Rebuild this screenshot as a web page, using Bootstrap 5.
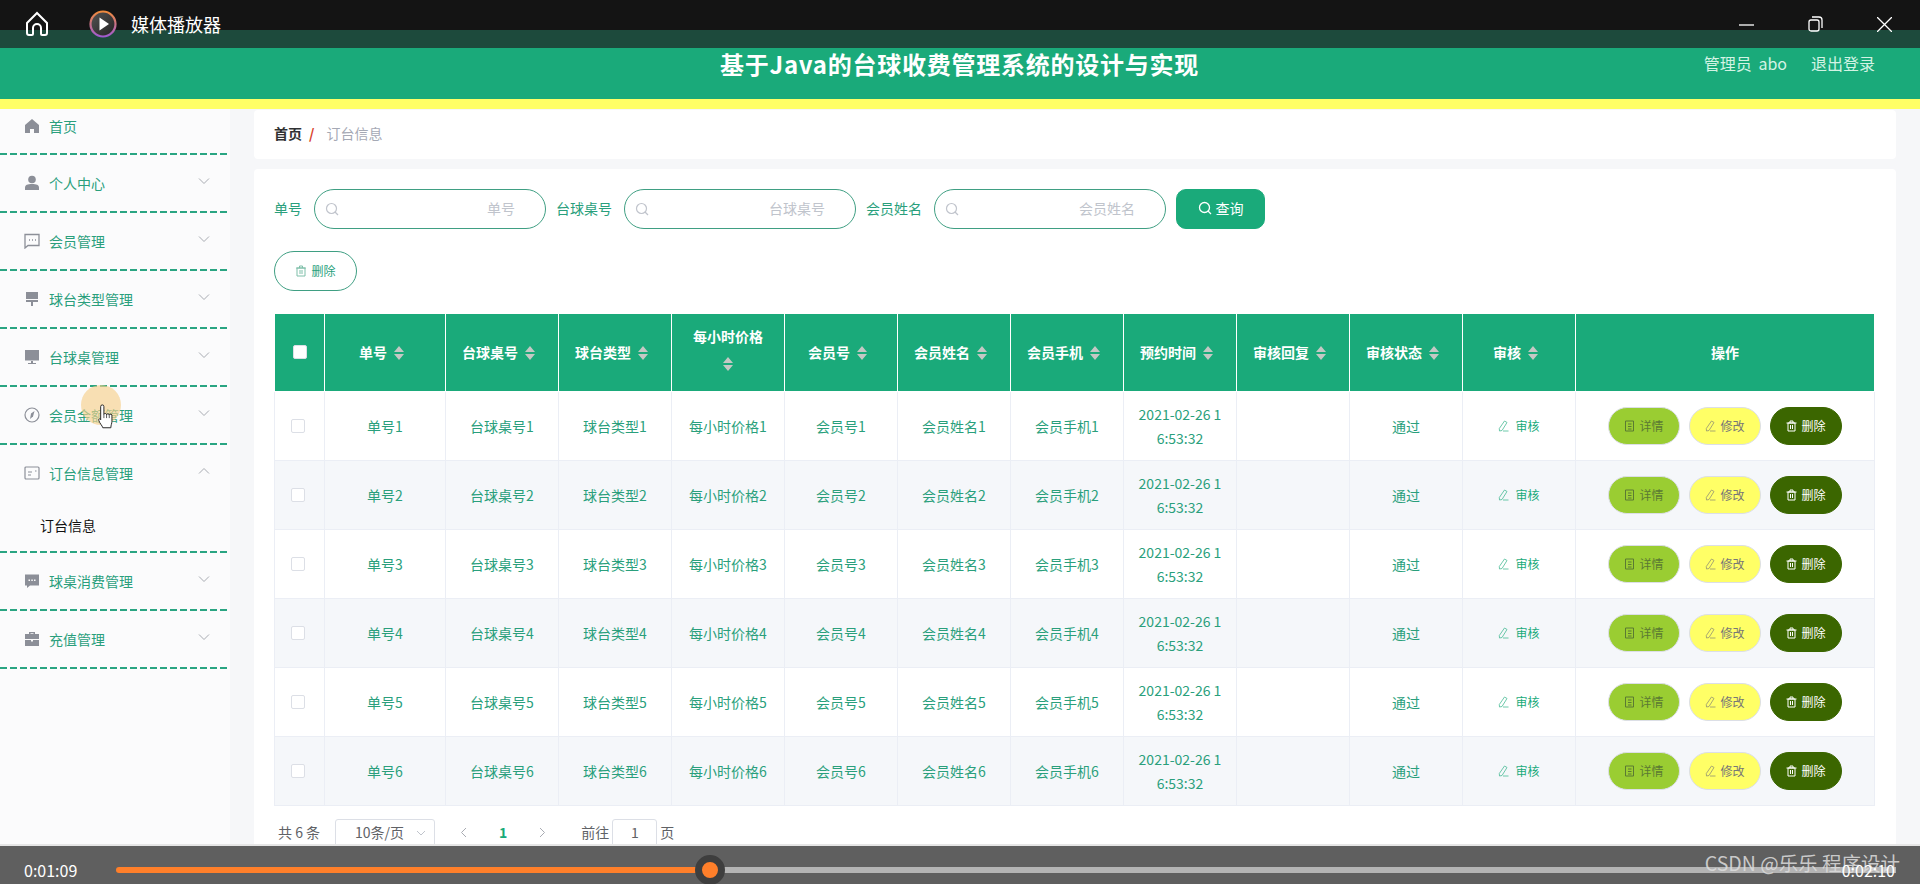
<!DOCTYPE html>
<html lang="en">
<head>
<meta charset="UTF-8">
<title>媒体播放器</title>
<link href="https://cdn.jsdelivr.net/npm/bootstrap@5.3.0/dist/css/bootstrap.min.css" rel="stylesheet">
<style>
html, body { height: 884px; overflow: hidden; }
body { font-family: "Noto Sans CJK SC", "Liberation Sans", sans-serif; background: #f6f7f9; font-size: 14px; color: #2a9f7c; }
.title-strip { height: 48px; background: linear-gradient(#141414 0 30px, #1d4a3c 30px 48px); color: #fff; font-size: 18px; padding-left: 25px; }
.player-logo { margin-left: 40px; margin-right: 14px; }
.win-btns { gap: 54px; padding-right: 28px; }
.app-head { height: 61px; background: #1aaa7a; border-bottom: 10px solid #ffff66; padding-right: 45px; }
.app-title { font-size: 24px; font-weight: 700; color: #fff; margin-top: -19px; margin-left: 720px; letter-spacing: .75px; }
.app-user { color: #d3f3e4; font-size: 16px; margin-top: -21px; gap: 24px; word-spacing: 3px; }
.side-col { width: 230px; height: 775px; background: #fbfbfc; flex: none; }
.side-item { height: 58px; padding: 0 20px 2px 24px; background: repeating-linear-gradient(90deg, #2aa582 0 7px, transparent 7px 10px) left bottom / 100% 2px no-repeat; }
.side-item.side-first { height: 46px; padding-bottom: 12px; }
.side-item.side-open { height: 108px; display: block !important; padding: 0; }
.side-row { height: 58px; padding: 0 20px 2px 24px; }
.side-child { color: #111; padding: 0 0 2px 40px; height: 46px; }
.side-icon { width: 16px; height: 16px; margin-right: 9px; flex: none; }
.side-chev { margin-left: auto; margin-top: -4px; }
.main-col { padding: 1px 24px 0; width: 1690px; }
.crumb-box { height: 49px; background: #fff; border-radius: 4px; padding: 0 20px 2px; margin-bottom: 10px; }
.crumb-box b { color: #303133; font-weight: 700; }
.crumb-sep { color: #d9412b; margin: 0 12px 0 7px; font-weight: 700; }
.crumb-now { color: #a5a9b5; }
.list-box { background: #fff; border-radius: 4px; padding: 20px; height: 700px; }
.search-row { height: 40px; }
.search-label { margin: -2px 12px 0 0; }
.search-wrap { width: 232px; margin-right: 10px; }
.search-input.form-control { height: 40px; border: 1px solid #3f9f83; border-radius: 20px; text-align: right; padding: 0 30px 2px; font-size: 14px; }
.search-input.form-control::placeholder { color: #c0c4cc; }
.search-ico { position: absolute; left: 11px; top: 13px; }
.query-btn.btn { width: 89px; height: 40px; background: #1aaa7a; border-color: #1aaa7a; color: #fff; border-radius: 10px; font-size: 14px; padding: 0 0 2px; }
.del-top.btn { width: 83px; height: 40px; margin-top: 22px; border: 1px solid #3f9f83; border-radius: 20px; font-size: 12px; color: #2a9f7c; background: #fff; padding: 0; }
.data-table.table { margin: 23px 0 0; width: 1600px; table-layout: fixed; font-size: 14px; border-color: #ebeef5; }
.data-table col { width: 113px; }
.data-table col:nth-child(1) { width: 50px; }
.data-table col:nth-child(2) { width: 121px; }
.data-table col:nth-child(13) { width: 299px; }
.data-table th { height: 77px; background: #1aaa7a; color: #fff; border: 1px solid #fff; border-width: 0 1px 1px 0; text-align: center; vertical-align: middle; padding: 0 10px; line-height: 27px; box-shadow: none; }
.data-table th:nth-child(5) { padding-bottom: 5px; }
.data-table td { height: 69px; padding: 0 10px; line-height: 24px; text-align: center; vertical-align: middle; color: #2a9f7c; border: 1px solid #ebeef5; word-break: break-all; background: #fff; box-shadow: none; }
.data-table tbody tr:nth-child(even) td { background: #f5f7fa; }
.sort-car { display: inline-block; width: 24px; height: 14px; vertical-align: -2px; }
.tick.form-check-input { width: 14px; height: 14px; margin: 0; border: 1px solid #dcdfe6; border-radius: 2px; background-color: transparent; display: block; }
tbody .tick.form-check-input { margin-left: 6px; background-color: #fff; }
th .tick.form-check-input { margin: 0 0 0 8px; background-color: #fff; }
.audit-link { font-size: 12px; color: #1aaa7a; gap: 6px; }
.row-acts { gap: 9px; }
.row-btn.btn { width: 72px; height: 38px; padding: 0; border-radius: 19px; font-size: 12px; border: 1px solid #dcdfe6; }
.btn-look.btn { background: #9acd32; color: #5b7a33; }
.btn-edit.btn { background: #ffff66; color: #777; }
.btn-drop.btn { background: #3b6600; color: #fff; border-color: #3b6600; }
.pager-row { height: 28px; margin-top: 13px; color: #606266; font-size: 14px; padding-left: 4px; }
.pager-select { width: 100px; height: 28px; border: 1px solid #dcdfe6; border-radius: 3px; margin: 0 25px 0 15px; padding: 0 8px 0 19px; }
.pager-num { color: #1aaa7a; font-weight: 700; margin: 0 32px; }
.pager-input { width: 45px; height: 28px; border: 1px solid #dcdfe6; border-radius: 3px; margin: 0 3px; }
.pager-goto { margin-left: 35px; }
.play-bar { height: 40px; background: #5f5f5f; border-top: 2px solid #e6e6e6; color: #fff; z-index: 5; padding: 10px 25px 0 24px; font-size: 16px; }
.track-fill { position: absolute; left: 116px; top: 21px; width: 594px; height: 6px; background: #ff7f2a; border-radius: 3px; }
.track-rest { position: absolute; left: 710px; top: 21px; right: 24px; height: 6px; background: #b4b4b4; }
.track-knob { position: absolute; left: 695px; top: 9px; width: 30px; height: 30px; border-radius: 50%; background: #ff7f2a; border: 7px solid #3e3e3e; }
.time-now, .time-end { position: relative; z-index: 2; }
.mark-text { position: absolute; right: 20px; top: 2px; color: #dcdcdc; opacity: .85; font-size: 19.500px; white-space: nowrap; }
.cursor-dot { position: absolute; left: 81px; top: 385px; width: 40px; height: 40px; border-radius: 50%; background: rgba(246, 208, 140, .65); z-index: 4; }
.cursor-hand { position: absolute; left: 98px; top: 404px; z-index: 4; }
</style>
</head>
<body>
<div class="title-strip d-flex align-items-center">
    <svg width="24" height="26" viewBox="0 0 24 26" fill="none" stroke="#fff" stroke-width="2"><path d="M2 12 12 2l10 10v10a2 2 0 0 1-2 2h-3a1 1 0 0 1-1-1v-6a4 4 0 0 0-8 0v6a1 1 0 0 1-1 1H4a2 2 0 0 1-2-2z"/></svg>
    <svg class="player-logo" width="28" height="28" viewBox="0 0 28 28"><defs><linearGradient id="ring" x1="0" y1="0" x2="0" y2="1"><stop offset="0" stop-color="#f08a3c"/><stop offset="1" stop-color="#a05bd0"/></linearGradient><linearGradient id="disc" x1="0" y1="0" x2="1" y2="1"><stop offset="0" stop-color="#555"/><stop offset="1" stop-color="#222"/></linearGradient></defs><circle cx="14" cy="14" r="12.5" fill="url(#disc)" stroke="url(#ring)" stroke-width="2.2"/><path d="M10.5 7.5v13l9.5-6.5z" fill="#fff"/></svg>
    <span>媒体播放器</span>
    <div class="win-btns d-flex align-items-center ms-auto">
        <svg width="15" height="15" viewBox="0 0 15 15" stroke="#fff" stroke-width="1.3"><path d="M0 8h15"/></svg>
        <svg width="15" height="16" viewBox="0 0 15 16" fill="none" stroke="#fff" stroke-width="1.3"><rect x="1" y="4" width="10" height="11" rx="2"/><path d="M4 1h7a3 3 0 0 1 3 3v8"/></svg>
        <svg width="15" height="15" viewBox="0 0 15 15" stroke="#fff" stroke-width="1.3"><path d="M0 0l15 15M15 0 0 15"/></svg>
    </div>
</div>
<header class="app-head d-flex align-items-center">
    <div class="app-title">基于Java的台球收费管理系统的设计与实现</div>
    <div class="app-user d-flex ms-auto"><span>管理员 abo</span><span>退出登录</span></div>
</header>
<div class="d-flex">
    <aside class="side-col">
        <div class="side-item side-first d-flex align-items-center"><svg class="side-icon" viewBox="0 0 16 16" fill="#8c8f98"><path d="M8 1 1 7v8h5v-4h4v4h5V7z"/></svg>首页</div>
        <div class="side-item d-flex align-items-center"><svg class="side-icon" viewBox="0 0 16 16" fill="#8c8f98"><circle cx="8" cy="4.5" r="3.8"/><path d="M1 15v-2.5C1 10 3.5 9 8 9s7 1 7 3.500V15z"/></svg>个人中心<svg class="side-chev" width="12" height="8" viewBox="0 0 12 8" fill="none" stroke="#a8abb2"><path d="m1 1.500 5 5 5-5"/></svg></div>
        <div class="side-item d-flex align-items-center"><svg class="side-icon" viewBox="0 0 16 16" fill="none" stroke="#8c8f98" stroke-width="1.300"><path d="M1 1.500h14v11H4l-3 2.500z"/><path d="M5 7h1M8 7h1M11 7h1"/></svg>会员管理<svg class="side-chev" width="12" height="8" viewBox="0 0 12 8" fill="none" stroke="#a8abb2"><path d="m1 1.500 5 5 5-5"/></svg></div>
        <div class="side-item d-flex align-items-center"><svg class="side-icon" viewBox="0 0 16 16" fill="#8c8f98"><path d="M2 1h12v7H2zM2 9h12v2H9v4H7v-4H2z"/></svg>球台类型管理<svg class="side-chev" width="12" height="8" viewBox="0 0 12 8" fill="none" stroke="#a8abb2"><path d="m1 1.500 5 5 5-5"/></svg></div>
        <div class="side-item d-flex align-items-center"><svg class="side-icon" viewBox="0 0 16 16" fill="#8c8f98"><path d="M1 1h14v10.500H1zM7 12h2v2h3v1H4v-1h3z"/></svg>台球桌管理<svg class="side-chev" width="12" height="8" viewBox="0 0 12 8" fill="none" stroke="#a8abb2"><path d="m1 1.500 5 5 5-5"/></svg></div>
        <div class="side-item d-flex align-items-center"><svg class="side-icon" viewBox="0 0 16 16" fill="none" stroke="#8c8f98" stroke-width="1.200"><circle cx="8" cy="8" r="7"/><path d="M10.500 4 9 9.500 6 12l1-5.500z" fill="#8c8f98" stroke="none"/></svg>会员金额管理<svg class="side-chev" width="12" height="8" viewBox="0 0 12 8" fill="none" stroke="#a8abb2"><path d="m1 1.500 5 5 5-5"/></svg></div>
        <div class="side-item side-open d-flex">
            <div class="side-row d-flex align-items-center"><svg class="side-icon" viewBox="0 0 16 16" fill="none" stroke="#8c8f98" stroke-width="1.200"><rect x="1" y="2" width="14" height="12" rx="1"/><path d="M4 7h4M4 10h3M11 6h1.500"/></svg>订台信息管理<svg class="side-chev" width="12" height="8" viewBox="0 0 12 8" fill="none" stroke="#a8abb2"><path d="m1 6.500 5-5 5 5"/></svg></div>
            <div class="side-child d-flex align-items-center">订台信息</div>
        </div>
        <div class="side-item d-flex align-items-center"><svg class="side-icon" viewBox="0 0 16 16" fill="#8c8f98"><path d="M1 1.500h14v11H6l-3 2.500v-2.500H1z"/><path d="M4.500 6.500h1.500v1.500H4.500zM7.300 6.500h1.500v1.500H7.300zM10 6.500h1.500v1.500H10z" fill="#fbfbfc"/></svg>球桌消费管理<svg class="side-chev" width="12" height="8" viewBox="0 0 12 8" fill="none" stroke="#a8abb2"><path d="m1 1.500 5 5 5-5"/></svg></div>
        <div class="side-item d-flex align-items-center"><svg class="side-icon" viewBox="0 0 16 16" fill="#8c8f98"><path d="M5 3V1h6v2h4v5H1V3zM6.500 3h3V2.300h-3zM1 9h6v1.500h2V9h6v6H1z"/></svg>充值管理<svg class="side-chev" width="12" height="8" viewBox="0 0 12 8" fill="none" stroke="#a8abb2"><path d="m1 1.500 5 5 5-5"/></svg></div>
    </aside>
    <main class="main-col">
        <div class="crumb-box d-flex align-items-center"><b>首页</b><span class="crumb-sep">/</span><span class="crumb-now">订台信息</span></div>
        <section class="list-box">
            <div class="search-row d-flex align-items-center">
                <label class="search-label">单号</label>
                <div class="search-wrap position-relative"><svg class="search-ico" width="14" height="14" viewBox="0 0 14 14" fill="none" stroke="#c0c4cc" stroke-width="1.200"><circle cx="6.500" cy="6.500" r="5"/><path d="m10 10 3 3"/></svg><input class="search-input form-control" placeholder="单号"></div>
                <label class="search-label">台球桌号</label>
                <div class="search-wrap position-relative"><svg class="search-ico" width="14" height="14" viewBox="0 0 14 14" fill="none" stroke="#c0c4cc" stroke-width="1.200"><circle cx="6.500" cy="6.500" r="5"/><path d="m10 10 3 3"/></svg><input class="search-input form-control" placeholder="台球桌号"></div>
                <label class="search-label">会员姓名</label>
                <div class="search-wrap position-relative"><svg class="search-ico" width="14" height="14" viewBox="0 0 14 14" fill="none" stroke="#c0c4cc" stroke-width="1.200"><circle cx="6.500" cy="6.500" r="5"/><path d="m10 10 3 3"/></svg><input class="search-input form-control" placeholder="会员姓名"></div>
                <button class="query-btn btn d-flex align-items-center justify-content-center gap-1"><svg width="14" height="14" viewBox="0 0 14 14" fill="none" stroke="#fff" stroke-width="1.300"><circle cx="6.500" cy="6.500" r="5"/><path d="m10 10 3 3"/></svg>查询</button>
            </div>
            <button class="del-top btn d-flex align-items-center justify-content-center gap-1"><svg width="12" height="12" viewBox="0 0 12 12" fill="none" stroke="#7fbfa9"><path d="M2 3h8v8H2zM1 3h10M4.500 3V1h3v2M5 5v4M7 5v4"/></svg>删除</button>
            <table class="data-table table">
                <colgroup id="cols"></colgroup>
                <thead><tr id="headRow"></tr></thead>
                <tbody id="bodyRows"></tbody>
            </table>
            <div class="pager-row d-flex align-items-center">
                <span>共 6 条</span>
                <div class="pager-select d-flex align-items-center justify-content-between"><span>10条/页</span><svg width="10" height="6" viewBox="0 0 10 6" fill="none" stroke="#c0c4cc"><path d="m1 1 4 4 4-4"/></svg></div>
                <svg width="7" height="11" viewBox="0 0 7 11" fill="none" stroke="#a8abb2"><path d="M6 1 1.500 5.500 6 10"/></svg>
                <span class="pager-num">1</span>
                <svg width="7" height="11" viewBox="0 0 7 11" fill="none" stroke="#a8abb2"><path d="m1 1 4.500 4.500L1 10"/></svg>
                <span class="pager-goto">前往</span>
                <div class="pager-input d-flex align-items-center justify-content-center">1</div>
                <span>页</span>
            </div>
        </section>
    </main>
</div>
<div class="cursor-dot"></div>
<svg class="cursor-hand" width="15" height="25" viewBox="0 0 14 23"><path d="M2.500 2.200a1.500 1.500 0 0 1 3 0V9.500a1.300 1.300 0 0 1 2.500.3 1.300 1.300 0 0 1 2.500.4 1.300 1.300 0 0 1 2.500.8V16c0 2-1 3.500-1 6H4.500C4 20 1.500 18 .7 15c-.3-1.200 1-1.800 1.800-1l0 .5z" fill="#fff" stroke="#222" stroke-width=".9" stroke-linejoin="round"/><path d="M5.500 9.500V13M8 9.800V13M10.500 10.200V13" fill="none" stroke="#222" stroke-width=".7"/></svg>
<footer class="play-bar fixed-bottom d-flex align-items-center justify-content-between">
    <span class="time-now">0:01:09</span>
    <div class="track-fill"></div><div class="track-rest"></div><div class="track-knob"></div>
    <span class="time-end">0:02:10</span>
    <span class="mark-text">CSDN @乐乐 程序设计</span>
</footer>
<script>
    // table is just repeated demo rows
    const heads = ['单号', '台球桌号', '球台类型', '每小时价格', '会员号', '会员姓名', '会员手机', '预约时间', '审核回复', '审核状态', '审核'];
    const caret = '<svg class="sort-car" viewBox="0 0 24 14"><path d="M12 0l5 6H7zM12 14l5-6H7z" fill="#c4c8c4"/></svg>';
    const pen = '<svg width="11" height="12" viewBox="0 0 11 12" fill="none" stroke="currentColor" stroke-width=".9" opacity=".7"><path d="M6.500 1 9 2.500 4 10.500l-2.500.5-.2-2.500zM5 11h5.500"/></svg>';
    const doc = '<svg width="11" height="12" viewBox="0 0 11 12" fill="none" stroke="currentColor"><path d="M1.500 1h8v10h-8zM4 4h3.500M4 6.500h3.500M4 9h3.500"/></svg>';
    const bin = '<svg width="11" height="12" viewBox="0 0 11 12" fill="none" stroke="currentColor"><path d="M2 3h7v8H2zM.500 3h10M4 3V1h3v2M4.500 5v4M6.500 5v4"/></svg>';

    document.getElementById('cols').innerHTML = '<col>'.repeat(13);
    document.getElementById('headRow').innerHTML = '<th><input type="checkbox" class="tick form-check-input"></th>'
        + heads.map(h => `<th>${h}${caret}</th>`).join('') + '<th>操作</th>';

    let rows = '';
    for (let i = 1; i <= 6; i++) {
        rows += `<tr><td><input type="checkbox" class="tick form-check-input"></td>
            <td>单号${i}</td><td>台球桌号${i}</td><td>球台类型${i}</td><td>每小时价格${i}</td>
            <td>会员号${i}</td><td>会员姓名${i}</td><td>会员手机${i}</td><td>2021-02-26 16:53:32</td><td></td><td>通过</td>
            <td><span class="audit-link d-inline-flex align-items-center">${pen}审核</span></td>
            <td><div class="row-acts d-flex justify-content-center">
                <button class="row-btn btn btn-look d-flex align-items-center justify-content-center gap-1">${doc}详情</button>
                <button class="row-btn btn btn-edit d-flex align-items-center justify-content-center gap-1">${pen}修改</button>
                <button class="row-btn btn btn-drop d-flex align-items-center justify-content-center gap-1">${bin}删除</button>
            </div></td></tr>`;
    }
    document.getElementById('bodyRows').innerHTML = rows;
</script>
<script src="https://cdn.jsdelivr.net/npm/bootstrap@5.3.0/dist/js/bootstrap.bundle.min.js"></script>
</body>
</html>
